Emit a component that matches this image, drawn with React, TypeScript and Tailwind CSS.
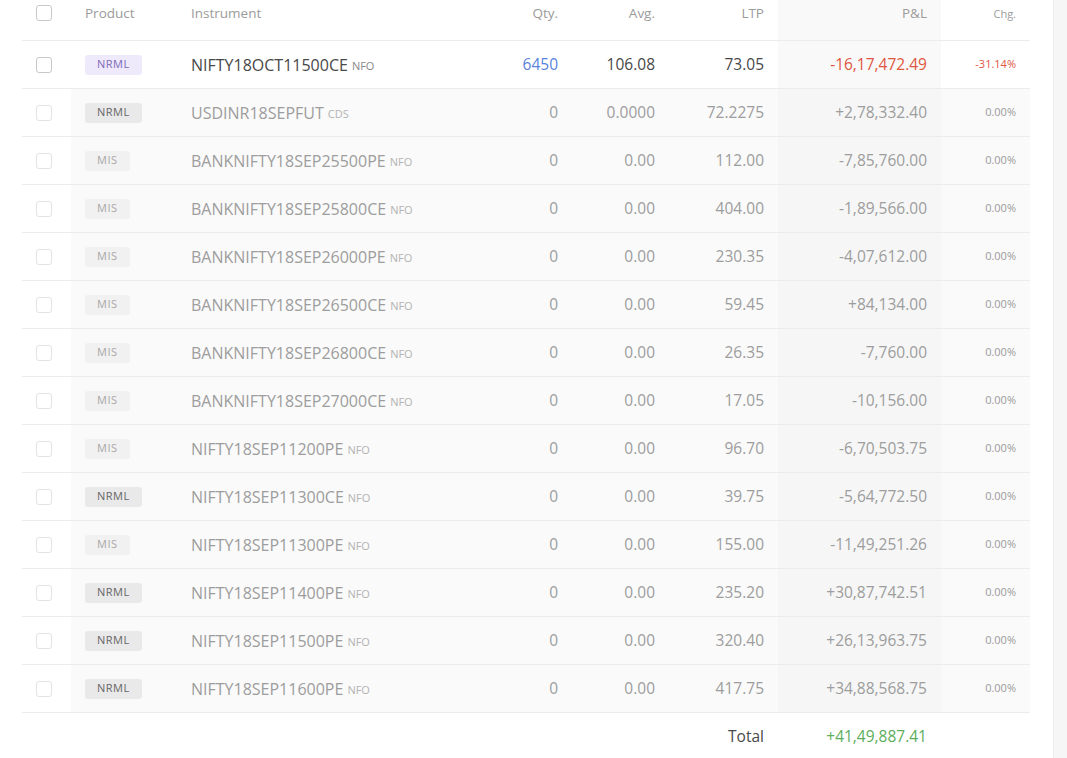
import React from "react";

type Position = {
  product: "NRML" | "MIS";
  symbol: string;
  exchange: string;
  qty: string;
  avg: string;
  ltp: string;
  pnl: string;
  chg: string;
  open?: boolean;
};

const positions: Position[] = [
  { product: "NRML", symbol: "NIFTY18OCT11500CE", exchange: "NFO", qty: "6450", avg: "106.08", ltp: "73.05", pnl: "-16,17,472.49", chg: "-31.14%", open: true },
  { product: "NRML", symbol: "USDINR18SEPFUT", exchange: "CDS", qty: "0", avg: "0.0000", ltp: "72.2275", pnl: "+2,78,332.40", chg: "0.00%" },
  { product: "MIS", symbol: "BANKNIFTY18SEP25500PE", exchange: "NFO", qty: "0", avg: "0.00", ltp: "112.00", pnl: "-7,85,760.00", chg: "0.00%" },
  { product: "MIS", symbol: "BANKNIFTY18SEP25800CE", exchange: "NFO", qty: "0", avg: "0.00", ltp: "404.00", pnl: "-1,89,566.00", chg: "0.00%" },
  { product: "MIS", symbol: "BANKNIFTY18SEP26000PE", exchange: "NFO", qty: "0", avg: "0.00", ltp: "230.35", pnl: "-4,07,612.00", chg: "0.00%" },
  { product: "MIS", symbol: "BANKNIFTY18SEP26500CE", exchange: "NFO", qty: "0", avg: "0.00", ltp: "59.45", pnl: "+84,134.00", chg: "0.00%" },
  { product: "MIS", symbol: "BANKNIFTY18SEP26800CE", exchange: "NFO", qty: "0", avg: "0.00", ltp: "26.35", pnl: "-7,760.00", chg: "0.00%" },
  { product: "MIS", symbol: "BANKNIFTY18SEP27000CE", exchange: "NFO", qty: "0", avg: "0.00", ltp: "17.05", pnl: "-10,156.00", chg: "0.00%" },
  { product: "MIS", symbol: "NIFTY18SEP11200PE", exchange: "NFO", qty: "0", avg: "0.00", ltp: "96.70", pnl: "-6,70,503.75", chg: "0.00%" },
  { product: "NRML", symbol: "NIFTY18SEP11300CE", exchange: "NFO", qty: "0", avg: "0.00", ltp: "39.75", pnl: "-5,64,772.50", chg: "0.00%" },
  { product: "MIS", symbol: "NIFTY18SEP11300PE", exchange: "NFO", qty: "0", avg: "0.00", ltp: "155.00", pnl: "-11,49,251.26", chg: "0.00%" },
  { product: "NRML", symbol: "NIFTY18SEP11400PE", exchange: "NFO", qty: "0", avg: "0.00", ltp: "235.20", pnl: "+30,87,742.51", chg: "0.00%" },
  { product: "NRML", symbol: "NIFTY18SEP11500PE", exchange: "NFO", qty: "0", avg: "0.00", ltp: "320.40", pnl: "+26,13,963.75", chg: "0.00%" },
  { product: "NRML", symbol: "NIFTY18SEP11600PE", exchange: "NFO", qty: "0", avg: "0.00", ltp: "417.75", pnl: "+34,88,568.75", chg: "0.00%" },
];

const cols = "grid grid-cols-[49px_106px_305px_90px_97px_109px_163px_89px]";

const Checkbox = ({ faded }: { faded?: boolean }) => (
  <span className={`block w-4 h-4 rounded-[3px] border bg-white ${faded ? "border-[#e3e3e3]" : "border-[#c9c9c9]"}`} />
);

const Badge = ({ product, open }: { product: string; open?: boolean }) => {
  let cls = "bg-[#e9e9e9] text-[#666]";
  if (open) cls = "bg-[#eeeafb] text-[#7d69b8]";
  else if (product === "MIS") cls = "bg-[#f1f1f1] text-[#a8a8a8]";
  return (
    <span className={`inline-flex items-center h-5 px-3 rounded-[3px] text-[11px] tracking-[0.5px] ${cls}`}>{product}</span>
  );
};

const PositionRow = ({ p }: { p: Position }) => {
  const bg = p.open ? "bg-white" : "bg-[#fafafa]";
  const text = p.open ? "text-[#484848]" : "text-[#9d9d9d]";
  return (
    <div className={`${cols} h-12 border-b border-[#ececec] items-stretch text-[15.5px]`}>
      <div className="flex items-center pl-[14px] bg-white">
        <Checkbox faded={!p.open} />
      </div>
      <div className={`flex items-center pl-[14px] ${bg}`}>
        <Badge product={p.product} open={p.open} />
      </div>
      <div className={`flex items-center pl-[14px] text-[16px] ${bg} ${text}`}>
        {p.symbol}
        <span className={`ml-1 text-[11px] mt-[3px] ${p.open ? "text-[#888]" : "text-[#b3b3b3]"}`}>{p.exchange}</span>
      </div>
      <div className={`flex items-center justify-end pr-[14px] ${bg} ${p.open ? "text-[#5a83dc]" : text}`}>{p.qty}</div>
      <div className={`flex items-center justify-end pr-[14px] ${bg} ${text}`}>{p.avg}</div>
      <div className={`flex items-center justify-end pr-[14px] ${bg} ${text}`}>{p.ltp}</div>
      <div className={`flex items-center justify-end pr-[14px] ${p.open ? "bg-[#f9f9f9] text-[#e0563f]" : "bg-[#f6f6f6] " + text}`}>{p.pnl}</div>
      <div className={`flex items-center justify-end pr-[14px] text-[11px] ${bg} ${p.open ? "text-[#e0563f]" : "text-[#9b9b9b]"}`}>{p.chg}</div>
    </div>
  );
};

export default function App() {
  return (
    <div className="flex w-full h-[758px] bg-white overflow-hidden" style={{ fontFamily: "'Open Sans', 'Noto Sans', sans-serif" }}>
      <div className="flex-1 pl-[22px]">
        <div className="w-[1008px]">
          <div className={`${cols} h-[41px] border-b border-[#ececec] text-[13.5px] text-[#9b9b9b] leading-[18px]`}>
            <div className="pl-[14px] pt-[5px]">
              <Checkbox />
            </div>
            <div className="pl-[14px] pt-[4px]">Product</div>
            <div className="pl-[14px] pt-[4px]">Instrument</div>
            <div className="pr-[14px] pt-[4px] text-right">Qty.</div>
            <div className="pr-[14px] pt-[4px] text-right">Avg.</div>
            <div className="pr-[14px] pt-[4px] text-right">LTP</div>
            <div className="pr-[14px] pt-[4px] text-right bg-[#f9f9f9]">P&amp;L</div>
            <div className="pr-[14px] pt-[5px] text-right text-[11px]">Chg.</div>
          </div>
          {positions.map((p) => (
            <PositionRow key={p.symbol} p={p} />
          ))}
          <div className={`${cols} h-12 items-center text-[15.5px]`}>
            <div className="col-span-5" />
            <div className="text-right pr-[14px] text-[#484848]">Total</div>
            <div className="text-right pr-[14px] text-[#5cae5c]">+41,49,887.41</div>
            <div />
          </div>
        </div>
      </div>
      <div className="w-[14px] bg-[#f6f6f6] border-l border-[#eeeeee]" />
    </div>
  );
}
